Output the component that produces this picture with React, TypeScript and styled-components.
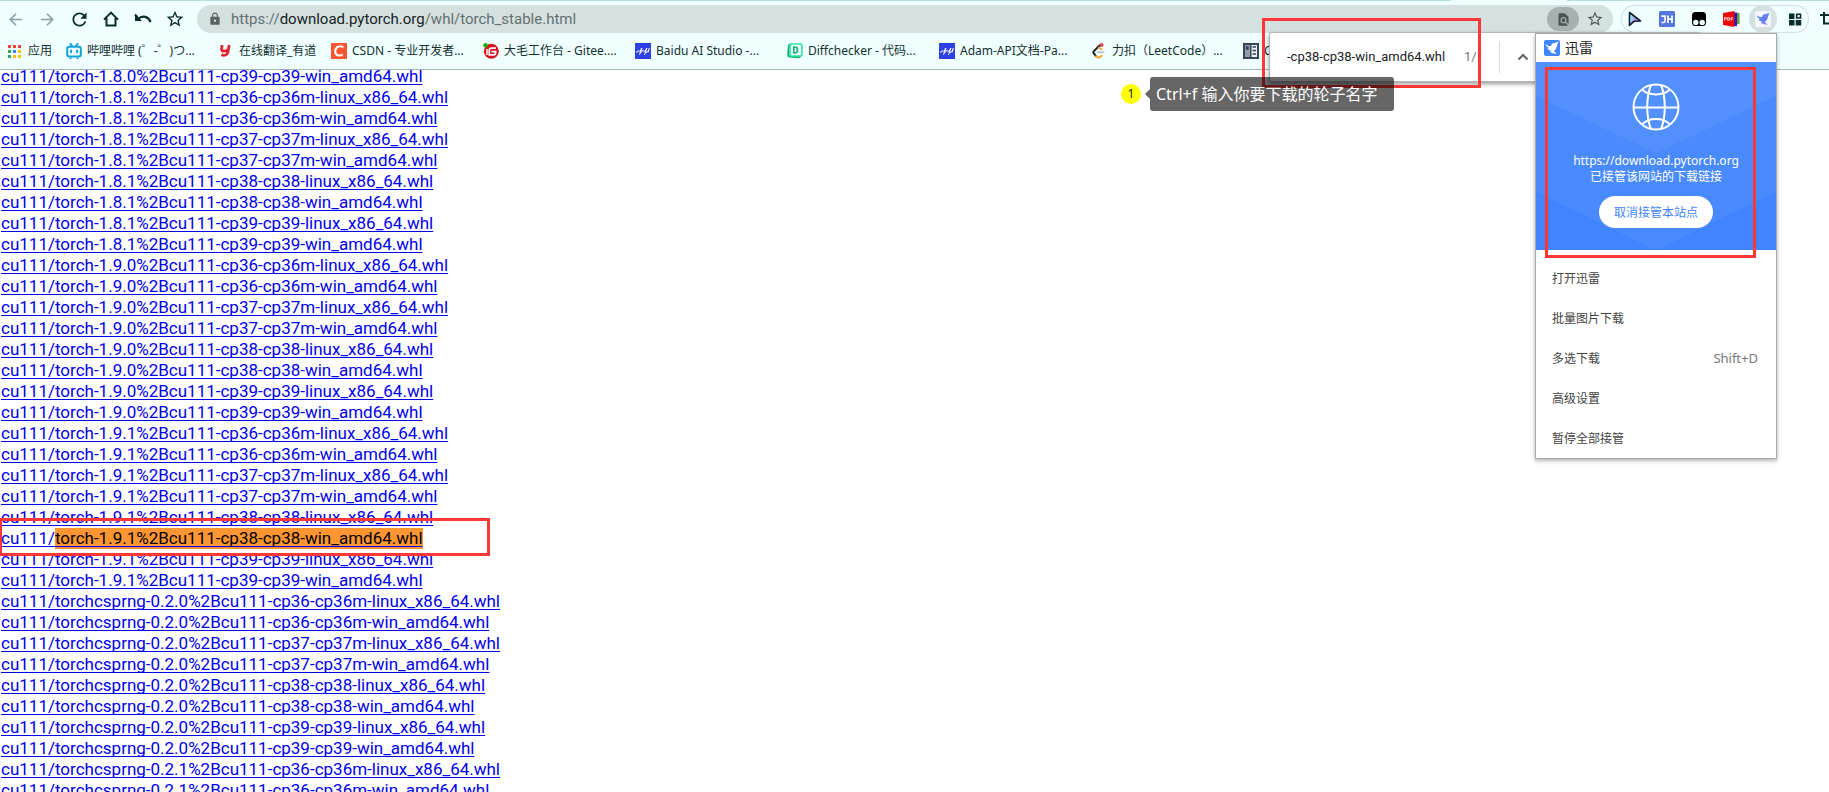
import React from 'react';
import styled, { createGlobalStyle } from 'styled-components';
import { MdArrowBack, MdArrowForward, MdRefresh, MdStarBorder, MdLock, MdFindInPage } from 'react-icons/md';

const GlobalStyle = createGlobalStyle`
  * { box-sizing: border-box; }
  body {
    margin: 0;
    background: #fff;
    overflow: hidden;
    font-family: 'Noto Sans', 'Noto Sans CJK SC', sans-serif;
  }
  button { border: 0; padding: 0; background: none; font-family: inherit; cursor: pointer; }
  svg { display: block; flex: none; }
`;

const RED = '#ff3837';

const Browser = styled.div`
  position: relative;
  display: flex;
  flex-direction: column;
  height: 100vh;
  overflow: hidden;
`;

const TabEdge = styled.div`
  display: flex;
  gap: 116px;
  height: 1px;
  background: #f0ffff;
`;

const EdgeLine = styled.div<{ $width?: number }>`
  flex: ${p => (p.$width ? `0 0 ${p.$width}px` : 1)};
  background: #b3e0de;
`;

const Toolbar = styled.header`
  display: flex;
  align-items: center;
  flex: none;
  height: 32px;
  padding: 4px 0 0 3px;
  background: #f0ffff;
  overflow: hidden;
`;

const NavButtons = styled.nav`
  display: flex;
  gap: 8px;
  margin-right: 10px;
`;

const NavButton = styled.button<{ $dim?: boolean }>`
  display: grid;
  place-items: center;
  width: 24px;
  height: 28px;
  color: ${p => (p.$dim ? '#8ca09f' : '#0a2b2b')};
`;

const AddressBar = styled.div`
  display: flex;
  align-items: center;
  flex: 1;
  height: 28px;
  margin-right: 8px;
  padding: 0 8px 0 11px;
  border-radius: 14px;
  background: #d5e0e0;
  color: #5a6363;
`;

const Url = styled.div`
  flex: 1;
  margin-left: 9px;
  font: 15px/20px Roboto, sans-serif;
  color: #647070;
  outline: none;
`;

const Domain = styled.span`
  color: #152424;
`;

const FindChip = styled.button`
  display: grid;
  place-items: center;
  width: 32px;
  height: 24px;
  margin-right: 6px;
  border-radius: 12px;
  background: #a7b1b1;
  color: #4b5454;
`;

const StarButton = styled.button`
  display: grid;
  place-items: center;
  width: 20px;
  height: 24px;
  color: #505a5a;
`;

const Extensions = styled.div`
  display: flex;
  gap: 4px;
  height: 28px;
  border-radius: 14px;
  box-shadow: inset 0 0 0 1px #d3e1e1;
`;

const ExtensionButton = styled.button<{ $active?: boolean }>`
  display: grid;
  place-items: center;
  width: 28px;
  height: 28px;
  border-radius: 14px;
  background: ${p => (p.$active ? '#d5e0e0' : 'transparent')};
`;

const EdgeButton = styled.button`
  flex: none;
  width: 9px;
  margin-left: 11px;
  overflow: hidden;
`;

const BookmarkBar = styled.nav`
  display: flex;
  align-items: center;
  flex: none;
  height: 37px;
  padding-left: 7px;
  border-bottom: 1px solid #a5b3b3;
  background: #f0ffff;
`;

const Bookmark = styled.a<{ $width: number }>`
  display: flex;
  align-items: center;
  gap: 5px;
  flex: none;
  width: ${p => p.$width}px;
  font-size: 12px;
  line-height: 18px;
  color: #12302f;
  text-decoration: none;
  white-space: nowrap;
`;

const Page = styled.main`
  flex: 1;
  min-height: 0;
  overflow: hidden;
`;

const LinkList = styled.ul`
  margin: -4px 0 0;
  padding: 0 0 0 1px;
  list-style: none;
  font-family: Roboto, sans-serif;
  font-size: 17px;
  line-height: 21px;
`;

const LinkRow = styled.li`
  height: 21px;
  white-space: nowrap;
`;

const WheelLink = styled.a`
  color: #0000ee;
  text-decoration: underline;
  text-decoration-thickness: 1px;
  text-underline-offset: 2px;
  text-decoration-skip-ink: none;
`;

const Hit = styled.mark`
  display: inline-block;
  height: 21px;
  background: #ff9632;
  color: #000;
  text-decoration: underline;
  text-decoration-color: #0000ee;
`;

const FindBar = styled.form`
  position: absolute;
  top: 33px;
  right: 130px;
  display: flex;
  align-items: center;
  width: 429px;
  height: 48px;
  padding-left: 17px;
  border-radius: 2px;
  background: #fff;
  box-shadow: 0 0 0 1px #b0b6b6, 0 2px 4px 1px rgba(0, 0, 0, 0.4);
`;

const FindInput = styled.input`
  width: 165px;
  border: 0;
  padding: 0;
  outline: none;
  background: none;
  font: 13px/18px Roboto, sans-serif;
  color: #202124;
`;

const FindCount = styled.span`
  width: 13px;
  margin: 0 22px 0 12px;
  overflow: hidden;
  font: 13px/18px Roboto, sans-serif;
  color: #75797d;
`;

const FindStep = styled.button`
  display: flex;
  align-items: center;
  height: 32px;
  padding-left: 15px;
  border-left: 1px solid #dadce0;
`;

const Popup = styled.aside`
  position: absolute;
  top: 34px;
  right: 53px;
  width: 240px;
  background: #fff;
  box-shadow: 0 0 0 1px #aaa, 0 2px 4px 1px rgba(0, 0, 0, 0.3);
`;

const PopupHeader = styled.h1`
  display: flex;
  align-items: center;
  gap: 5px;
  height: 28px;
  margin: 0;
  padding-left: 8px;
  font-size: 14px;
  font-weight: 400;
  line-height: 20px;
  color: #222;
`;

const SitePanel = styled.section`
  display: flex;
  flex-direction: column;
  align-items: center;
  height: 188px;
  padding-top: 21px;
  color: #fff;
  background:
    linear-gradient(to bottom left, transparent 50%, #4084ff 50%) 0 130px / 50% 58px no-repeat,
    linear-gradient(to bottom right, transparent 50%, #4084ff 50%) 100% 130px / 50% 58px no-repeat,
    linear-gradient(to top right, #4a8aff 50%, transparent 50%) 0 34px / 50% 57px no-repeat,
    linear-gradient(to top left, #4a8aff 50%, transparent 50%) 100% 34px / 50% 57px no-repeat,
    linear-gradient(#5290ff 91px, #4a8aff 91px);
`;

const SiteText = styled.p`
  margin: 22px 0 11px;
  font-size: 12px;
  line-height: 16px;
  text-align: center;
`;

const ReleaseButton = styled.button`
  width: 114px;
  height: 32px;
  border-radius: 16px;
  background: #fff;
  font-size: 12px;
  color: #4285ff;
`;

const Menu = styled.div`
  padding-top: 8px;
`;

const MenuItem = styled.button`
  display: flex;
  align-items: center;
  justify-content: space-between;
  width: 100%;
  height: 40px;
  padding: 0 18px 0 16px;
  font-size: 12px;
  color: #444;
`;

const Shortcut = styled.span`
  font-size: 13px;
  color: #777;
`;

const Frame = styled.div`
  position: absolute;
  border: 3px solid ${RED};
  pointer-events: none;
`;

const FindFrame = styled(Frame)`
  top: 18px;
  right: 348px;
  width: 219px;
  height: 70px;
`;

const SiteFrame = styled(Frame)`
  top: 67px;
  right: 73px;
  width: 211px;
  height: 191px;
`;

const HitFrame = styled(Frame)`
  top: 518px;
  left: -1px;
  width: 491px;
  height: 38px;
`;

const Callout = styled.div`
  position: absolute;
  top: 77px;
  right: 435px;
  display: flex;
  align-items: center;
`;

const CalloutNumber = styled.span`
  width: 20px;
  height: 20px;
  margin-right: 4px;
  border-radius: 10px;
  background: #ff0;
  font-size: 12px;
  line-height: 20px;
  text-align: center;
  color: #222;
`;

const CalloutArrow = styled.span`
  border: 5px solid transparent;
  border-left-width: 0;
  border-right-color: rgba(0, 0, 0, 0.6);
`;

const CalloutText = styled.span`
  width: 244px;
  height: 34px;
  padding-left: 6px;
  border-radius: 3px;
  background: rgba(0, 0, 0, 0.6);
  font-size: 16px;
  line-height: 34px;
  color: #fff;
  white-space: nowrap;
`;

const HomeIcon = () => (
  <svg width="16" height="16" viewBox="0 0 16 16" fill="none" stroke="currentColor" strokeWidth="2">
    <path d="M1 8.6 8 1.6l7 7M3.5 7v7.5h9V7" />
  </svg>
);

const UndoIcon = () => (
  <svg width="18" height="14" viewBox="0 0 18 14">
    <path d="M1 2v7h7.200L5.400 6.400C9.500 3.800 13.600 5.800 15.800 10.400" fill="none" stroke="none" />
    <path d="M1 2.500 3.600 5.200" stroke="currentColor" strokeWidth="2" />
    <path d="M1 2v7h7Z" fill="currentColor" />
    <path d="M4 7C8.500 2.800 14.500 4.600 16.600 10" fill="none" stroke="currentColor" strokeWidth="2.200" />
  </svg>
);

const AppsIcon = () => {
  const colors = ['#ea4335', '#ea4335', '#ea4335', '#34a853', '#4285f4', '#fbbc05', '#34a853', '#fbbc05', '#fbbc05'];
  return (
    <svg width="16" height="16" viewBox="0 0 16 16">
      {colors.map((c, i) => (
        <rect key={i} x={1 + (i % 3) * 5} y={2 + Math.floor(i / 3) * 5} width="3" height="3" fill={c} />
      ))}
    </svg>
  );
};

const BilibiliIcon = () => (
  <svg width="16" height="16" viewBox="0 0 16 16" fill="none" stroke="#10a2dc" strokeWidth="2" strokeLinecap="round">
    <path d="M4.500 1 6 3M11.500 1 10 3" />
    <rect x="1.200" y="3.800" width="13.600" height="9.800" rx="2" />
    <path d="M5 7.600v1.600M11 7.600v1.600" />
    <path d="M4 15.200h1M11 15.200h1" strokeWidth="1.400" />
  </svg>
);

const YoudaoIcon = () => (
  <svg width="16" height="16" viewBox="0 0 16 16" fill="none" stroke="#e8202d" strokeWidth="2.800">
    <path d="M4 2 3.600 6.500C3.600 8.600 8.500 9 10 6.400M11.200 2 9.800 9.500C9.300 12 6.500 13 3.400 11.800" />
  </svg>
);

const CsdnIcon = () => (
  <svg width="16" height="16" viewBox="0 0 16 16">
    <path d="M0 0h16v16H0z" fill="#fc5531" />
    <path d="M12.300 4.400C9 2.200 4.600 3.600 4.200 8c-.3 4.400 4.400 5.600 7.500 3.700" fill="none" stroke="#fff" strokeWidth="2" />
  </svg>
);

const GiteeIcon = () => (
  <svg width="16" height="16" viewBox="0 0 16 16">
    <circle cx="8.300" cy="8.300" r="7.500" fill="#d8151f" />
    <path d="M13 5.200H8.500Q6.200 5.200 6.200 7.500v4.300h4.400q2 0 2-2V8.600H8.400" fill="none" stroke="#fff" strokeWidth="1.700" />
    <path d="M4 6v6" stroke="#fff" strokeWidth="1.500" />
    <circle cx="2.500" cy="2.300" r="2.300" fill="#12b312" />
  </svg>
);

const PaddleIcon = () => (
  <svg width="16" height="16" viewBox="0 0 16 16">
    <path d="M0 0h16v16H0z" fill="#2f3fe6" />
    <path d="M1.500 10C3 6.500 4 7 4 8.500S5.500 9 6.500 5M4.500 12 7 5M6.500 9.500C8 6 9 7 9 8.500S10.500 9 11.500 5M9.500 12 12 5M11 9.500c1.500 0 2.500-1.500 3.300-4.500M13 9.500l1-3" fill="none" stroke="#fff" strokeWidth="1" />
  </svg>
);

const DiffcheckerIcon = () => (
  <svg width="16" height="16" viewBox="0 0 16 16" fill="none">
    <rect x="1.500" y="2" width="12" height="12" rx="2" stroke="#16b273" strokeWidth="2" transform="rotate(5 8 8)" />
    <rect x="3" y="1" width="12" height="12" rx="2" fill="#f0ffff" stroke="#2ce49b" strokeWidth="1.600" />
    <path d="M6.800 4.200h1.400q2.400 0 2.400 2.800t-2.400 2.800H6.800z" stroke="#19b878" strokeWidth="1.700" />
  </svg>
);

const LeetCodeIcon = () => (
  <svg width="16" height="16" viewBox="0 0 16 16" fill="none" strokeWidth="2" strokeLinecap="round">
    <path d="M8.500 2.500 2.700 8.300q-.8 1 0 2l2.500 3" stroke="#1b1b1b" />
    <path d="M5.200 13.300q2 2.200 4.300.6l1.300-1.300M8 4.500l2.500 2" stroke="#f5a732" />
    <path d="M6.500 9.300h6" stroke="#c4c7c7" />
    <circle cx="10.500" cy="2" r="2" fill="#e0474c" />
  </svg>
);

const BookIcon = () => (
  <svg width="16" height="16" viewBox="0 0 16 16">
    <path d="M0 0h16v16H0z" fill="#3b4654" />
    <path d="M2 2h5v12H2z" fill="#8d9cab" />
    <path d="M8.500 2H14v12H8.500z" fill="#e9f0f2" />
    <path d="M3.500 4h1.500v2H3.500zM9.500 4H13M9.500 7.500H13M9.500 11H13" fill="#3b4654" stroke="#3b4654" strokeWidth="1.400" />
  </svg>
);

const PointerIcon = () => (
  <svg width="16" height="16" viewBox="0 0 16 16">
    <path d="M2.500 1.500v13L7 10.300l6.500-.3z" fill="#c58df0" stroke="#0c2230" strokeWidth="1.600" strokeLinejoin="round" />
    <path d="M3.500 3.500v8.500L7 7z" fill="#83e5ea" />
  </svg>
);

const JHIcon = () => (
  <svg width="16" height="16" viewBox="0 0 16 16">
    <rect width="16" height="16" rx="1.500" fill="#5578e0" />
    <path d="M2.500 5.200H6V10q0 1.500-1.500 1.500h-2M9 4.500v7.500M13 4.500v7.500M9 8.200h4" fill="none" stroke="#fff" strokeWidth="1.700" />
  </svg>
);

const MonkeyIcon = () => (
  <svg width="16" height="16" viewBox="0 0 16 16">
    <rect x="1" y="1" width="14" height="14" rx="3.500" fill="#000" />
    <circle cx="4.800" cy="11.400" r="2.700" fill="#f0ffff" />
    <circle cx="11.200" cy="11.400" r="2.700" fill="#f0ffff" />
  </svg>
);

const PdfIcon = () => (
  <svg width="17" height="16" viewBox="0 0 17 16">
    <path d="M11 2h5.500v11H11z" fill="#5aa51d" />
    <path d="M10 1.500h4V15h-4z" fill="#3010d8" />
    <path d="M0 2 11.500 0v16L0 14z" fill="#f00808" />
    <path d="M1.500 9.500v-3h1.200q1 0 1 .8t-1 .8H1.500M4.800 6.500v3h.8q1.300 0 1.300-1.500T5.600 6.500zM8.200 9.500v-3h2M8.200 8h1.600" fill="none" stroke="#fff" strokeWidth=".8" />
  </svg>
);

const BIRD = 'M1.500 4.200C3.500 5.600 5.400 6.200 7.200 6 7.300 4 8.800 2.800 10 3.300L14.800 1.500C13.800 3 13.500 4.200 13 5.800c-.6 2.600-1.500 4-3 5.200.8 1 1.800 2 3 2.700-3 0-6-.7-7.500-2.200 1 0 1.800-.2 2.300-.6C5.500 10.500 4 9.500 3.500 8.200c.7.200 1.300.200 1.800 0C3.400 7.300 2 6 1.500 4.200Z';

const ThunderIcon = ({ solid }: { solid?: boolean }) => (
  <svg width="16" height="16" viewBox="0 0 16 16">
    <defs>
      <linearGradient id="wing" x1="0" y1="0" x2="1" y2="1">
        <stop offset="0" stopColor="#36a0ff" />
        <stop offset=".6" stopColor="#6c7cf5" />
        <stop offset="1" stopColor="#b08cf5" />
      </linearGradient>
    </defs>
    <rect width="16" height="16" rx="2" fill={solid ? '#4185ff' : '#f5f6ff'} />
    <path d={BIRD} fill={solid ? '#fff' : 'url(#wing)'} />
  </svg>
);

const GridIcon = () => (
  <svg width="14" height="14" viewBox="0 0 14 14" fill="#0a2b2b">
    <path d="M1 1.500h5.500V7H1zM1 8h5.500v5.500H1zM7.700 8h5.500v5.500H7.700z" />
    <path d="M8.700 2.300h3.800V6H8.700z" fill="none" stroke="#0a2b2b" strokeWidth="1.600" />
  </svg>
);

const CropIcon = () => (
  <svg width="16" height="16" viewBox="0 0 16 16" fill="none" stroke="#0a2b2b" strokeWidth="2">
    <path d="M0 4h13v12M4 1v11.500h12" />
  </svg>
);

const GlobeIcon = () => (
  <svg width="48" height="48" viewBox="0 0 48 48" fill="none" stroke="#fff" strokeWidth="2">
    <circle cx="24" cy="24" r="22.500" />
    <path d="M1.500 24.500h45M19 2c-5 12-5 32 0 44M29 2c5 12 5 32 0 44M10 6.500c7 6.500 21 6.500 28 0M10 41.500c7-7.500 21-7.500 28 0" />
  </svg>
);

const bookmarks = [
  { label: '应用', width: 59, icon: <AppsIcon /> },
  { label: '哔哩哔哩 (゜-゜)つ...', width: 152, icon: <BilibiliIcon /> },
  { label: '在线翻译_有道', width: 113, icon: <YoudaoIcon /> },
  { label: 'CSDN - 专业开发者...', width: 152, icon: <CsdnIcon /> },
  { label: '大毛工作台 - Gitee....', width: 152, icon: <GiteeIcon /> },
  { label: 'Baidu AI Studio -...', width: 152, icon: <PaddleIcon /> },
  { label: 'Diffchecker - 代码...', width: 152, icon: <DiffcheckerIcon /> },
  { label: 'Adam-API文档-Pa...', width: 152, icon: <PaddleIcon /> },
  { label: '力扣（LeetCode）...', width: 152, icon: <LeetCodeIcon /> },
  { label: 'C', width: 30, icon: <BookIcon /> },
];

const builds = ['cp36-cp36m', 'cp37-cp37m', 'cp38-cp38', 'cp39-cp39'].flatMap(python =>
  ['linux_x86_64', 'win_amd64'].map(platform => `${python}-${platform}`),
);

const wheels = [
  ...builds.slice(-1).map(b => `torch-1.8.0%2Bcu111-${b}.whl`),
  ...['torch-1.8.1', 'torch-1.9.0', 'torch-1.9.1', 'torchcsprng-0.2.0', 'torchcsprng-0.2.1'].flatMap(pkg =>
    builds.map(b => `${pkg}%2Bcu111-${b}.whl`),
  ),
].slice(0, 35);

const currentHit = 'torch-1.9.1%2Bcu111-cp38-cp38-win_amd64.whl';

const menuItems = [
  { label: '打开迅雷' },
  { label: '批量图片下载' },
  { label: '多选下载', shortcut: 'Shift+D' },
  { label: '高级设置' },
  { label: '暂停全部接管' },
];

export default function App() {
  return (
    <Browser>
      <GlobalStyle />
      <TabEdge>
        <EdgeLine />
        <EdgeLine $width={262} />
      </TabEdge>
      <Toolbar>
        <NavButtons>
          <NavButton $dim aria-label="后退"><MdArrowBack size={19} /></NavButton>
          <NavButton $dim aria-label="前进"><MdArrowForward size={19} /></NavButton>
          <NavButton aria-label="刷新"><MdRefresh size={21} /></NavButton>
          <NavButton aria-label="主页"><HomeIcon /></NavButton>
          <NavButton aria-label="撤销"><UndoIcon /></NavButton>
          <NavButton aria-label="收藏"><MdStarBorder size={20} /></NavButton>
        </NavButtons>
        <AddressBar>
          <MdLock size={14} />
          <Url role="textbox" aria-label="地址">
            https://<Domain>download.pytorch.org</Domain>/whl/torch_stable.html
          </Url>
          <FindChip aria-label="查找"><MdFindInPage size={15} /></FindChip>
          <StarButton aria-label="为此页添加书签"><MdStarBorder size={18} /></StarButton>
        </AddressBar>
        <Extensions>
          <ExtensionButton aria-label="指针"><PointerIcon /></ExtensionButton>
          <ExtensionButton aria-label="JH"><JHIcon /></ExtensionButton>
          <ExtensionButton aria-label="脚本"><MonkeyIcon /></ExtensionButton>
          <ExtensionButton aria-label="PDF"><PdfIcon /></ExtensionButton>
          <ExtensionButton $active aria-label="迅雷"><ThunderIcon /></ExtensionButton>
          <ExtensionButton aria-label="扩展程序"><GridIcon /></ExtensionButton>
        </Extensions>
        <EdgeButton aria-label="截图"><CropIcon /></EdgeButton>
      </Toolbar>
      <BookmarkBar>
        {bookmarks.map(b => (
          <Bookmark key={b.label} href="#" $width={b.width}>
            {b.icon}
            {b.label}
          </Bookmark>
        ))}
      </BookmarkBar>
      <Page>
        <LinkList>
          {wheels.map(name => (
            <LinkRow key={name}>
              <WheelLink href={`#${name}`}>
                cu111/{name === currentHit ? <Hit>{name}</Hit> : name}
              </WheelLink>
            </LinkRow>
          ))}
        </LinkList>
      </Page>

      <FindBar>
        <FindInput aria-label="在页面中查找" defaultValue="-cp38-cp38-win_amd64.whl" />
        <FindCount>1/1</FindCount>
        <FindStep type="button" aria-label="上一个">
          <svg width="16" height="16" viewBox="0 0 16 16" fill="none" stroke="#5f6368" strokeWidth="2">
            <path d="m3.500 10.500 4.500-4.500 4.500 4.500" />
          </svg>
        </FindStep>
      </FindBar>

      <Popup>
        <PopupHeader><ThunderIcon solid />迅雷</PopupHeader>
        <SitePanel>
          <GlobeIcon />
          <SiteText>
            https://download.pytorch.org
            <br />
            已接管该网站的下载链接
          </SiteText>
          <ReleaseButton>取消接管本站点</ReleaseButton>
        </SitePanel>
        <Menu>
          {menuItems.map(item => (
            <MenuItem key={item.label}>
              {item.label}
              {item.shortcut && <Shortcut>{item.shortcut}</Shortcut>}
            </MenuItem>
          ))}
        </Menu>
      </Popup>

      <FindFrame />
      <SiteFrame />
      <HitFrame />
      <Callout>
        <CalloutNumber>1</CalloutNumber>
        <CalloutArrow />
        <CalloutText>Ctrl+f 输入你要下载的轮子名字</CalloutText>
      </Callout>
    </Browser>
  );
}
